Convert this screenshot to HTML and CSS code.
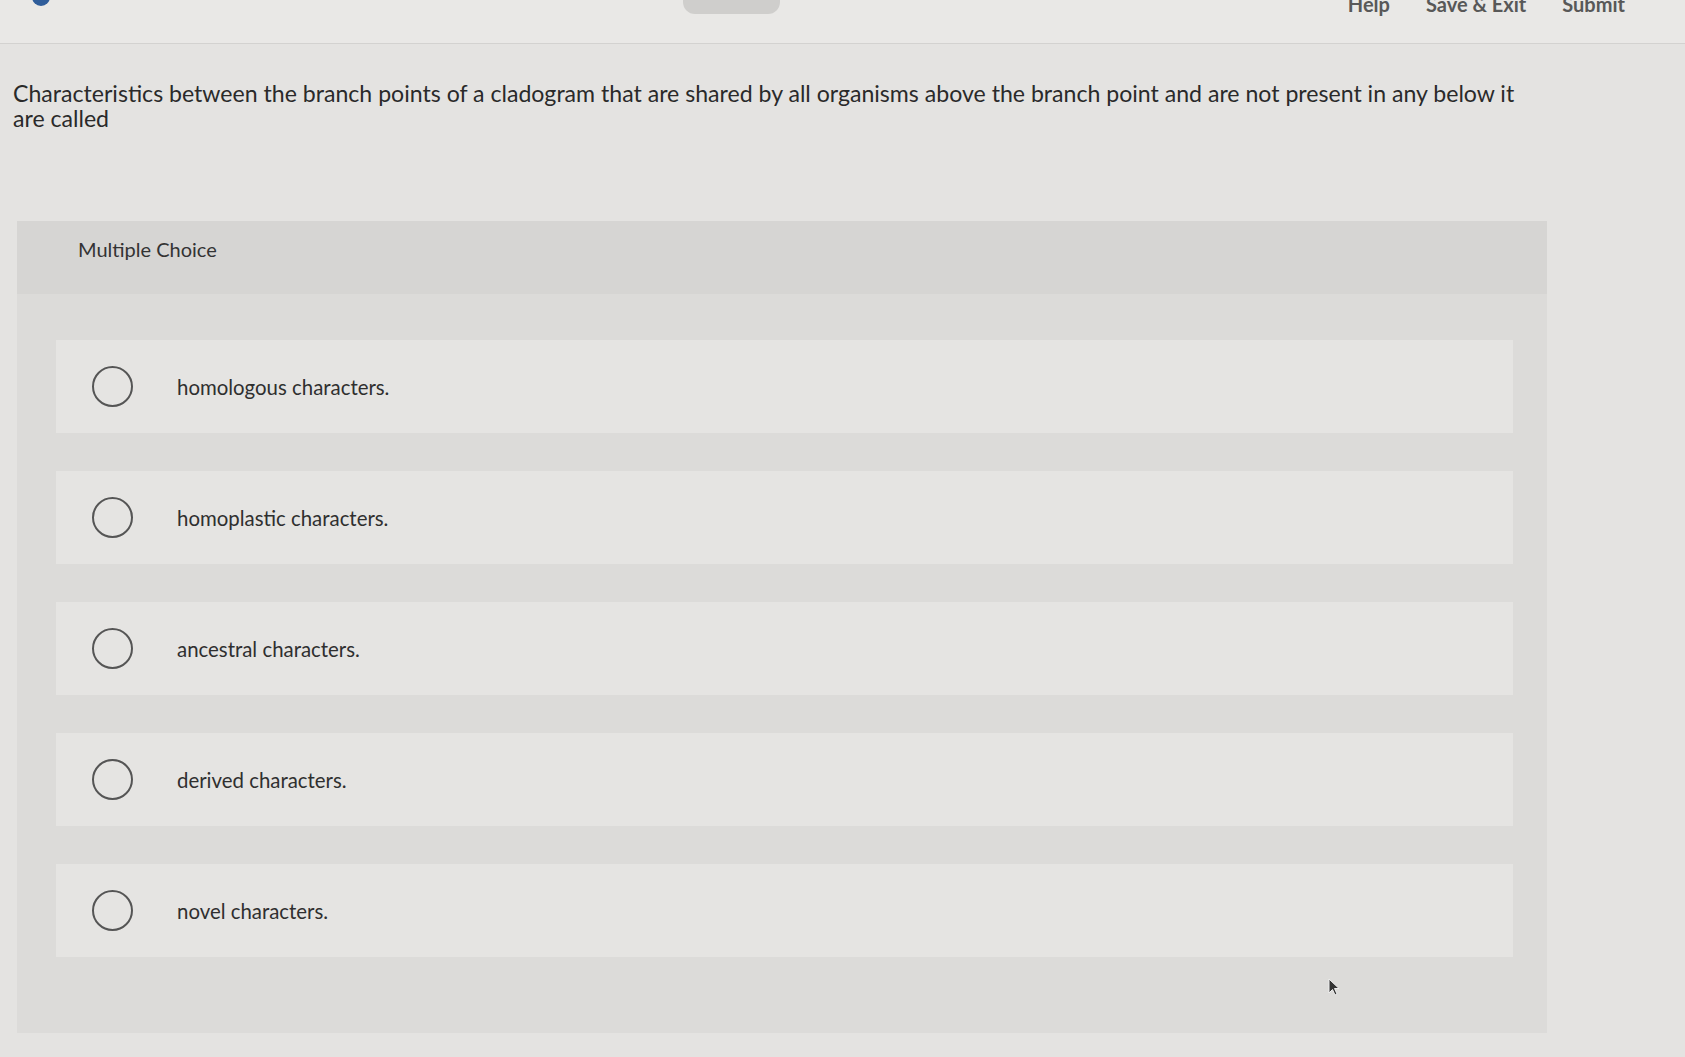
FILE: index.html
```html
<!DOCTYPE html>
<html lang="en">
<head>
<meta charset="utf-8">
<title>Multiple Choice</title>
<link rel="stylesheet" href="styles.css">
</head>
<body>
<header class="topbar">
  <span class="dot"></span>
  <span class="tab"></span>
  <nav class="nav">
    <a class="nav-link">Help</a>
    <a class="nav-link">Save &amp; Exit</a>
    <a class="nav-link submit">Submit</a>
  </nav>
</header>
<main class="content">
  <p class="question">Characteristics between the branch points of a cladogram that are shared by all organisms above the branch point and are not present in any below it are called</p>
  <section class="panel">
    <div class="panel-head">Multiple Choice</div>
    <div class="panel-body">
      <label class="option"><span class="radio"></span><span class="opt-text">homologous characters.</span></label>
      <label class="option"><span class="radio"></span><span class="opt-text">homoplastic characters.</span></label>
      <label class="option"><span class="radio"></span><span class="opt-text">ancestral characters.</span></label>
      <label class="option"><span class="radio"></span><span class="opt-text">derived characters.</span></label>
      <label class="option"><span class="radio"></span><span class="opt-text">novel characters.</span></label>
    </div>
  </section>
</main>
<svg class="cursor" width="14" height="20" viewBox="0 0 14 20"><path d="M1 1 L1 15 L4.5 11.5 L7 17 L9 16 L6.5 10.5 L11 10.5 Z" fill="#333" stroke="#eee" stroke-width="1"/></svg>
</body>
</html>
```
FILE: styles.css
```css
html, body {
  margin: 0;
  padding: 0;
}
body {
  background: #e4e3e1;
  font-family: Lato, "Open Sans", "Liberation Sans", sans-serif;
  color: #2e2e2e;
  width: 1685px;
  height: 1057px;
  overflow: hidden;
  position: relative;
}
.topbar {
  height: 43px;
  border-bottom: 1px solid #d3d2d0;
  background: #e9e8e6;
  display: flex;
  align-items: flex-start;
  position: relative;
}
.dot {
  position: absolute;
  left: 32px;
  top: -12px;
  width: 18px;
  height: 18px;
  border-radius: 50%;
  background: #2f5d9a;
}
.tab {
  position: absolute;
  left: 683px;
  top: 0;
  width: 97px;
  height: 14px;
  border-radius: 0 0 12px 12px;
  background: #cfcecc;
}
.nav {
  margin-left: auto;
  margin-right: 60px;
  margin-top: -6px;
  display: flex;
  gap: 36px;
}
.nav-link {
  font-size: 20px;
  font-weight: 700;
  color: #585858;
  line-height: 20px;
}
.content {
  padding: 0 0 0 13px;
}
.question {
  margin: 37px 0 0 0;
  max-width: 1520px;
  font-size: 23.1px;
  line-height: 25px;
  color: #2a2a2a;
}
.panel {
  margin: 90px 0 0 4px;
  width: 1530px;
  background: #dcdbd9;
}
.panel-head {
  background: #d6d5d3;
  height: 73px;
  padding: 16px 0 0 61px;
  box-sizing: border-box;
  font-size: 20px;
  color: #333;
}
.panel-body {
  padding: 46px 34px 76px 39px;
  display: flex;
  flex-direction: column;
  gap: 38px;
}
.option {
  height: 93px;
  background: #e5e4e2;
  display: flex;
  align-items: center;
  padding-left: 36px;
}
.radio {
  width: 37px;
  height: 37px;
  border: 2px solid #555;
  border-radius: 50%;
  flex: none;
}
.opt-text {
  margin-left: 44px;
  font-size: 20.4px;
  color: #2f2f2f;
}
.cursor {
  position: absolute;
  left: 1328px;
  top: 978px;
}
```
